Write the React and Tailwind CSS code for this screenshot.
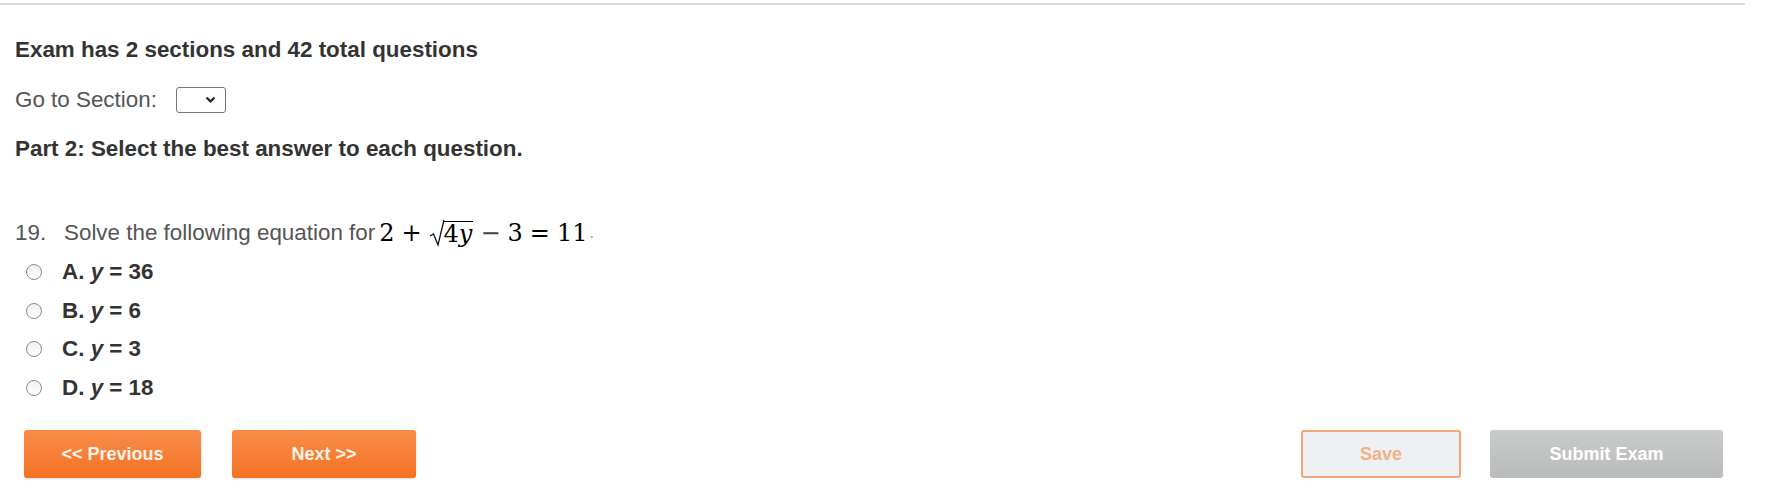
import React, { useState } from 'react';

const options = [
  { key: 'A', value: '36' },
  { key: 'B', value: '6' },
  { key: 'C', value: '3' },
  { key: 'D', value: '18' },
];

function Equation() {
  return (
    <span className="inline-flex items-center font-['DejaVu_Serif',serif] text-[24px] text-black leading-[30px] ml-[4px]">
      <span>2</span>
      <span className="mx-[7px]">+</span>
      <svg width="16" height="30" viewBox="0 0 16 30" className="-mr-[1px]">
        <path d="M1 18 L4.5 16 L9 27 L15 2" fill="none" stroke="#111" strokeWidth="1.3" />
      </svg>
      <span className="border-t-[1.5px] border-black leading-[25px] mt-[1px] pr-[1px]">
        4<i>y</i>
      </span>
      <span className="mx-[7px] text-[#444]">−</span>
      <span>3</span>
      <span className="mx-[7px]">=</span>
      <span>11</span>
      <span className="text-[#999] text-[14px] ml-[2px] self-end">.</span>
    </span>
  );
}

function Radio({ checked, onClick }) {
  return (
    <button
      onClick={onClick}
      className="w-[16px] h-[16px] rounded-full border border-[#8a8a8a] bg-gradient-to-b from-[#f0f0f0] to-white flex items-center justify-center"
    >
      {checked && <span className="w-[8px] h-[8px] rounded-full bg-[#333]" />}
    </button>
  );
}

export default function App() {
  const [answer, setAnswer] = useState(null);

  return (
    <div className="w-full min-h-[495px] bg-white font-['Liberation_Sans',Arial,sans-serif]">
      <div className="h-[2px] w-[1745px] mt-[3px] bg-[#dcdcdc]" />

      <div className="pl-[15px]">
        <h2 className="mt-[32px] text-[22.4px] leading-[26px] font-bold text-[#333]">
          Exam has 2 sections and 42 total questions
        </h2>

        <div className="mt-[24px] flex items-center h-[26px]">
          <span className="text-[22.4px] text-[#555]">Go to Section:</span>
          <div className="ml-[19px] w-[50px] h-[26px] border border-[#777] rounded-[3px] flex items-center justify-end pr-[9px]">
            <svg width="11" height="8" viewBox="0 0 11 8">
              <path d="M1.5 1.5 L5.5 5.5 L9.5 1.5" fill="none" stroke="#222" strokeWidth="2.2" />
            </svg>
          </div>
        </div>

        <h3 className="mt-[23px] text-[22.4px] leading-[26px] font-bold text-[#333]">
          Part 2: Select the best answer to each question.
        </h3>

        <div className="mt-[56px] flex items-center h-[30px] text-[22.4px] text-[#555]">
          <span className="w-[49px]">19.</span>
          <span>Solve the following equation for</span>
          <Equation />
        </div>

        <div className="mt-[5px]">
          {options.map((o) => (
            <div key={o.key} className="h-[38.5px] flex items-center">
              <div className="ml-[11px]">
                <Radio checked={answer === o.key} onClick={() => setAnswer(o.key)} />
              </div>
              <span className="ml-[20px] text-[22.4px] font-bold text-[#333]">
                {o.key}. <i>y</i> = {o.value}
              </span>
            </div>
          ))}
        </div>
      </div>

      <div className="mt-[23px] ml-[24px] mr-[50px] flex items-center justify-between">
        <div className="flex gap-[31px]">
          <button className="w-[177px] h-[48px] rounded-[3px] bg-gradient-to-b from-[#f78c48] to-[#f47223] text-[#fff3ea] text-[18px] font-bold shadow-[0_1px_2px_rgba(0,0,0,0.15)]">
            &lt;&lt; Previous
          </button>
          <button className="w-[184px] h-[48px] rounded-[3px] bg-gradient-to-b from-[#f78c48] to-[#f47223] text-[#fff3ea] text-[18px] font-bold shadow-[0_1px_2px_rgba(0,0,0,0.15)]">
            Next &gt;&gt;
          </button>
        </div>
        <div className="flex gap-[29px]">
          <button className="w-[160px] h-[48px] rounded-[3px] border-2 border-[#f4a675] bg-[#eff0f4] text-[#f2b187] text-[18px] font-bold">
            Save
          </button>
          <button className="w-[233px] h-[48px] rounded-[3px] bg-gradient-to-b from-[#c9caca] to-[#babbbb] text-white text-[18px] font-bold">
            Submit Exam
          </button>
        </div>
      </div>
    </div>
  );
}
